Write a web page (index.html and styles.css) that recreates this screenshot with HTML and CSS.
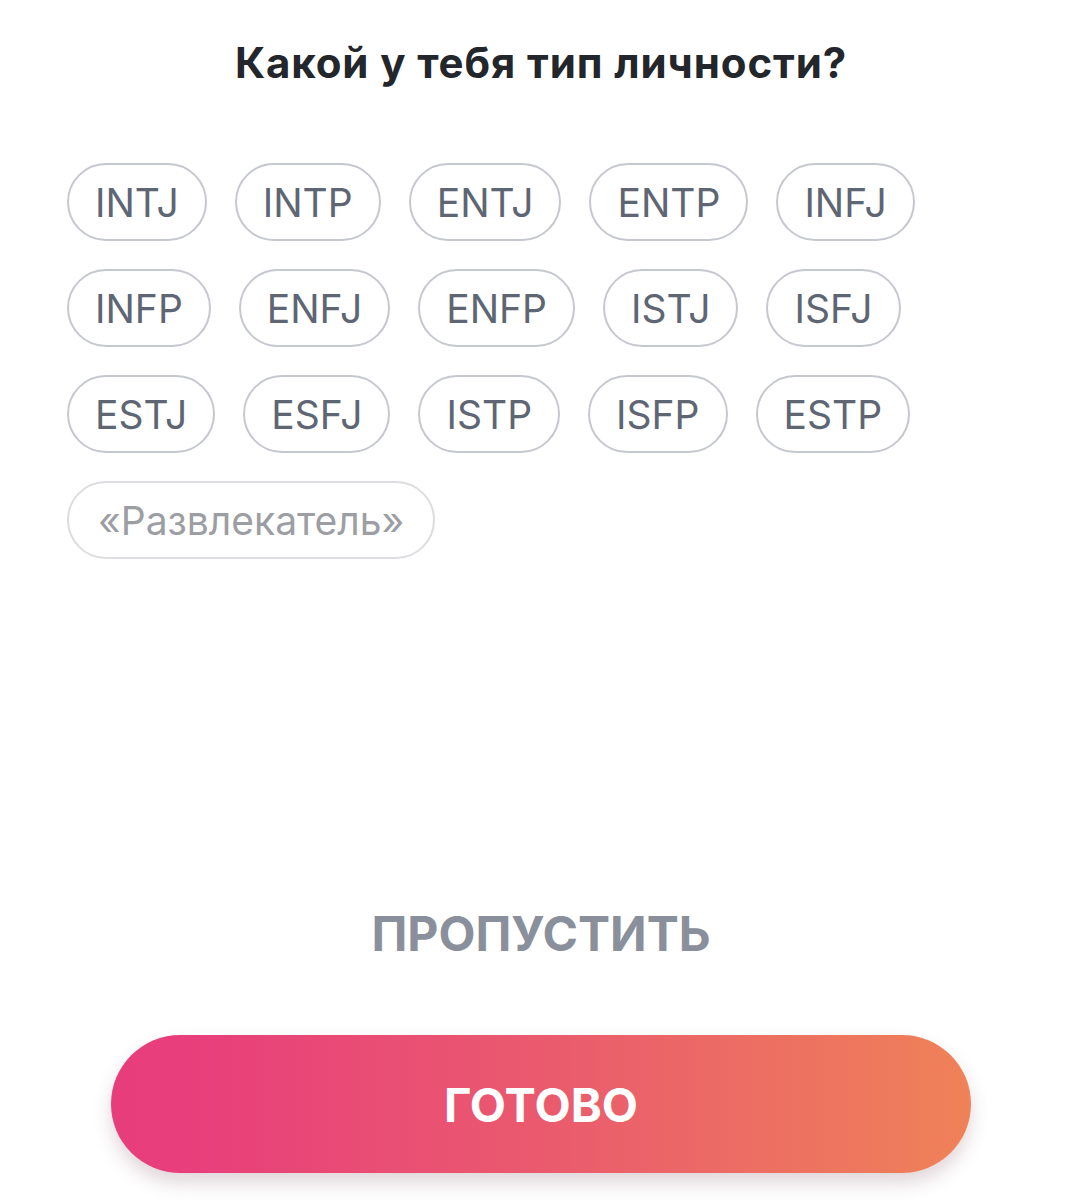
FILE: index.html
```html
<!DOCTYPE html>
<html lang="ru">
<head>
<meta charset="utf-8">
<title>Тип личности</title>
<link rel="stylesheet" href="styles.css">
</head>
<body>
<main class="screen">
  <h1 class="title">Какой у тебя тип личности?</h1>
  <div class="chips">
    <span class="chip">INTJ</span>
    <span class="chip">INTP</span>
    <span class="chip">ENTJ</span>
    <span class="chip">ENTP</span>
    <span class="chip">INFJ</span>
    <span class="chip">INFP</span>
    <span class="chip">ENFJ</span>
    <span class="chip">ENFP</span>
    <span class="chip">ISTJ</span>
    <span class="chip">ISFJ</span>
    <span class="chip">ESTJ</span>
    <span class="chip">ESFJ</span>
    <span class="chip">ISTP</span>
    <span class="chip">ISFP</span>
    <span class="chip">ESTP</span>
    <span class="chip chip-muted">«Развлекатель»</span>
  </div>
  <div class="actions">
    <button class="skip" type="button">ПРОПУСТИТЬ</button>
    <button class="done" type="button">ГОТОВО</button>
  </div>
</main>
</body>
</html>
```

FILE: styles.css
```css
html, body {
  margin: 0;
  padding: 0;
  background: #ffffff;
}

.screen {
  width: 1082px;
  height: 1200px;
  box-sizing: border-box;
  display: flex;
  flex-direction: column;
  font-family: "Inter", "Lato", "Liberation Sans", sans-serif;
}

.title {
  margin: 38px 0 0;
  text-align: center;
  font-size: 42px;
  font-weight: 700;
  line-height: 50px;
  color: #23262b;
  letter-spacing: 0.9px;
}

.chips {
  margin-top: 75px;
  padding: 0 67px;
  display: flex;
  flex-wrap: wrap;
  column-gap: 28px;
  row-gap: 28px;
}

.chip {
  box-sizing: border-box;
  height: 78px;
  padding: 0 26px;
  display: inline-flex;
  align-items: center;
  border: 2px solid #c5c8ce;
  border-radius: 39px;
  font-size: 39px;
  font-weight: 400;
  color: #5e6573;
  line-height: 1;
}

.chip-muted {
  padding: 0 29px;
  color: #9c9ea4;
  border-color: #dcdde0;
}

.actions {
  margin-top: auto;
  padding-bottom: 27px;
  display: flex;
  flex-direction: column;
  align-items: center;
}

.skip {
  border: 0;
  background: none;
  padding: 0;
  font-family: inherit;
  font-size: 48px;
  font-weight: 700;
  line-height: 60px;
  color: #8a909b;
  cursor: pointer;
}

.done {
  margin-top: 71px;
  width: 860px;
  height: 138px;
  border: 0;
  border-radius: 69px;
  background: linear-gradient(90deg, #e83d7b 0%, #e83f7b 10%, #ea5a6e 50%, #ef8258 100%);
  box-shadow: 0 10px 18px rgba(120, 70, 80, 0.22);
  font-family: inherit;
  font-size: 47px;
  font-weight: 700;
  line-height: 1;
  color: #ffffff;
  cursor: pointer;
}
```
